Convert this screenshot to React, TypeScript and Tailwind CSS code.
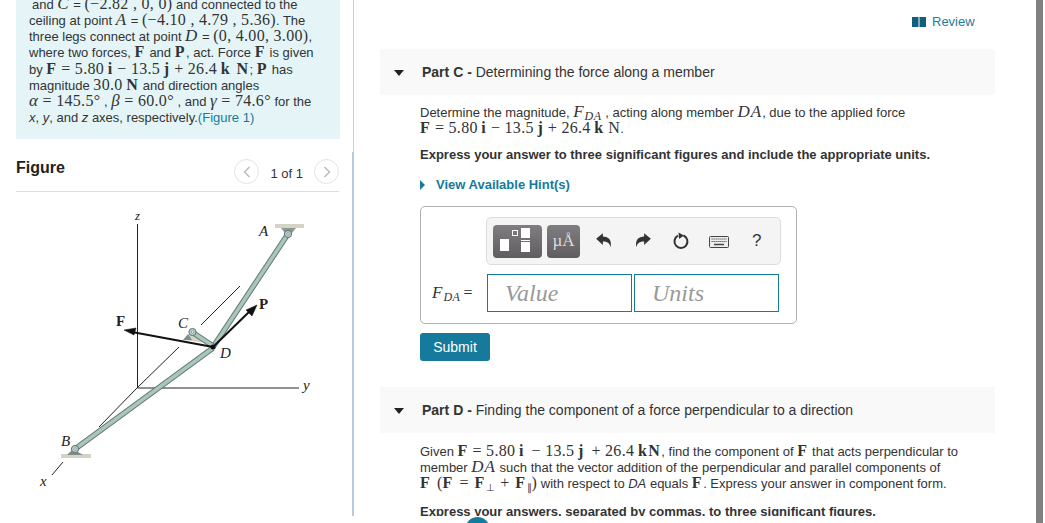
import type { ReactNode } from 'react';

const M = ({ children }: { children: ReactNode }) => (
  <span className="font-['Liberation_Serif',serif] text-[16px] tracking-[0.3px]">{children}</span>
);
const B = ({ children }: { children: ReactNode }) => (
  <span className="font-['Liberation_Serif',serif] text-[16px] font-bold tracking-[1.5px]">{children}</span>
);
const I = ({ children }: { children: ReactNode }) => (
  <span className="font-['Liberation_Serif',serif] text-[17px] italic tracking-[1px]">{children}</span>
);
const Sub = ({ children }: { children: ReactNode }) => (
  <sub className="font-['Liberation_Serif',serif] italic text-[12px] tracking-[0.5px]">{children}</sub>
);

const Member = ({ d }: { d: string }) => (
  <g fill="none">
    <path d={d} stroke="#5f7470" strokeWidth="5.5" />
    <path d={d} stroke="#a9c6bd" strokeWidth="3.6" />
  </g>
);

const Pin = ({ x, y }: { x: number; y: number }) => (
  <g>
    <circle cx={x} cy={y} r="3.6" fill="#b9cfc9" stroke="#5f7470" strokeWidth="1" />
    <circle cx={x} cy={y} r="1.3" fill="#dfeee9" stroke="#5f7470" strokeWidth="0.5" />
  </g>
);

/** The three-legged frame drawing; viewBox uses page coordinates */
const FrameFigure = () => (
  <svg width="336" height="320" viewBox="16 196 336 320" className="block">
    <g stroke="#222" strokeWidth="1" fill="none">
      <path d="M137.5 225V389H299" />
      <path d="M137 389L99 428" />
      <path d="M179 348L137 389" />
      <path d="M201 326L240 287" />
      <path d="M63 463L52 476" />
    </g>
    <rect x="275" y="225" width="29" height="4" fill="#d6d2c4" />
    <path d="M281 229H296L292 234H285Z" fill="#8a9a98" />
    <path d="M183 341L192 333L207 344Z" fill="#d4d2c6" />
    <path d="M183 341L188 335L192 341Z" fill="#7d8d8b" />
    <rect x="61" y="455" width="30" height="4" fill="#d6d2c4" />
    <path d="M67 456L73 450L83 456Z" fill="#7d8d8b" />
    <Member d="M288 235L213 348" />
    <Member d="M192 333L213 347" />
    <Member d="M75 450L213 349" />
    <Pin x={288} y={235} />
    <Pin x={192.5} y={333} />
    <Pin x={75} y={450} />
    <g stroke="#111" strokeWidth="2" fill="#111">
      <path d="M213 348L132 333" fill="none" />
      <path d="M213 348L250 312" fill="none" />
      <path d="M124 331L136 329L134 336Z" strokeWidth="0.5" />
      <path d="M257 306L252 317L246 311Z" strokeWidth="0.5" />
      <circle cx="213" cy="348" r="1.5" />
    </g>
    <g fontFamily="Liberation Serif, serif" fontSize="15" fill="#222" fontStyle="italic">
      <text x="135" y="221" fontSize="13">z</text>
      <text x="259" y="237">A</text>
      <text x="178" y="329">C</text>
      <text x="220" y="359">D</text>
      <text x="303" y="391">y</text>
      <text x="61" y="447">B</text>
      <text x="40" y="487">x</text>
    </g>
    <g fontFamily="Liberation Serif, serif" fontSize="15" fill="#222" fontWeight="bold">
      <text x="116" y="327">F</text>
      <text x="259" y="310">P</text>
    </g>
  </svg>
);

const Band = ({ part, title }: { part: string; title: string }) => (
  <div className="w-[615px] h-[46px] bg-[#f9f9f9] flex items-center">
    <div className="ml-[14px] mt-[1px] w-0 h-0 border-x-[5px] border-x-transparent border-t-[6px] border-t-[#222]" />
    <h2 className="ml-[18px] text-[14px] text-[#333] whitespace-nowrap">
      <span className="font-bold">Part {part} - </span>
      {title}
    </h2>
  </div>
);

const Toolbar = () => (
  <div className="w-[295px] h-[48px] ml-[65px] bg-[#f4f4f4] border border-[#ddd] rounded-[5px] flex items-center pl-[6px]">
    <div className="relative w-[49px] h-[33px] rounded-[4px] bg-gradient-to-b from-[#807e80] to-[#5f5d5f]">
      <div className="absolute left-[7px] top-[14px] w-[9px] h-[12px] bg-white" />
      <div className="absolute left-[19px] top-[5px] w-[6px] h-[6px] border border-white" />
      <div className="absolute left-[28px] top-[3px] w-[9px] h-[10px] bg-white" />
      <div className="absolute left-[28px] top-[15px] w-[9px] h-px bg-white" />
      <div className="absolute left-[28px] top-[17px] w-[9px] h-[10px] bg-white" />
    </div>
    <div className="ml-[5px] w-[33px] h-[33px] rounded-[4px] bg-gradient-to-b from-[#807e80] to-[#5f5d5f] flex items-center justify-center font-['Liberation_Serif',serif] text-[17px] text-[#ddd]">
      µÅ
    </div>
    <svg width="18" height="18" viewBox="0 0 16 16" className="ml-[15px]" fill="#333">
      <path d="M1 6L7 1V4C12 4 15 7 14 13.500C13 10 11 8.500 7 8.500V11.500Z" />
    </svg>
    <svg width="18" height="18" viewBox="0 0 16 16" className="ml-[21px]" fill="#333">
      <path d="M15 6L9 1V4C4 4 1 7 2 13.500C3 10 5 8.500 9 8.500V11.500Z" />
    </svg>
    <svg width="18" height="18" viewBox="0 0 18 18" className="ml-[20px]" fill="none">
      <path d="M11.500 3.500A6.500 6.500 0 1 1 6 3.700" stroke="#333" strokeWidth="2" />
      <path d="M6.500 0.500L12 3.500L7 7Z" fill="#333" />
    </svg>
    <svg width="20" height="12" viewBox="0 0 20 12" className="ml-[19px] mt-[2px]">
      <rect x="0.500" y="0.500" width="19" height="11" rx="1" fill="#eee" stroke="#444" />
      <path d="M2.500 3H17.500M2.500 5.500H17.500" stroke="#444" strokeWidth="1.200" strokeDasharray="1.200 0.800" />
      <path d="M5 8.500H15" stroke="#444" strokeWidth="1.500" />
    </svg>
    <span className="ml-[23px] text-[17px] text-[#333]">?</span>
  </div>
);

export default function App() {
  return (
    <div className="relative h-[523px] w-[1045px] overflow-hidden bg-white flex font-['Liberation_Sans',sans-serif] text-[13px] text-[#333]">
      {/* Left column */}
      <div className="w-[352px] shrink-0 pl-[16px]">
        <div className="w-[324px] h-[139px] overflow-hidden bg-[#e5f5f7] pl-[13px] leading-[16px] whitespace-nowrap">
          <div className="mt-[-4.500px]">
            <div className="h-[16.300px] pl-[3px]">
              and <I>C</I> = <M>(−2.82 , 0, 0)</M> and connected to the
            </div>
            <div className="h-[16.300px]">
              ceiling at point <I>A</I> = <M>(−4.10 , 4.79 , 5.36)</M>. The
            </div>
            <div className="h-[16.300px]">
              three legs connect at point <I>D</I> = <M>(0, 4.00, 3.00)</M>,
            </div>
            <div className="h-[16.300px]">
              where two forces, <B>F</B> and <B>P</B>, act. Force <B>F</B> is given
            </div>
            <div className="h-[16.300px]">
              by <B>F</B> <M>= 5.80</M> <B>i</B> <M>− 13.5</M> <B>j</B> <M>+ 26.4</M> <B>k N</B>; <B>P</B> has
            </div>
            <div className="h-[16.300px]">
              magnitude <M>30.0</M> <B>N</B> and direction angles
            </div>
            <div className="h-[16.300px]">
              <I>α</I> <M>= 145.5°</M> , <I>β</I> <M>= 60.0°</M> , and <I>γ</I> <M>= 74.6°</M> for the
            </div>
            <div className="h-[16.300px]">
              <em>x</em>, <em>y</em>, and <em>z</em> axes, respectively.<span className="text-[#157a9c]">(Figure 1)</span>
            </div>
          </div>
        </div>
        <div className="w-[323px] h-[53px] border-b border-[#ddd] flex items-start">
          <h3 className="mt-[17px] text-[16px] font-bold text-[#222]">Figure</h3>
          <div className="ml-auto mt-[20px] flex items-center">
            <div className="w-[25px] h-[25px] rounded-full border border-[#e4e4e4] flex items-center justify-center text-[#bbb]">
              <svg width="8" height="12" viewBox="0 0 8 12" fill="none" stroke="#bbb" strokeWidth="1.500">
                <path d="M6.500 1L1.500 6L6.500 11" />
              </svg>
            </div>
            <span className="ml-[11px] mt-[5px] text-[#333] text-[13px]">1 of 1</span>
            <div className="ml-[11px] w-[25px] h-[25px] rounded-full border border-[#e4e4e4] flex items-center justify-center">
              <svg width="8" height="12" viewBox="0 0 8 12" fill="none" stroke="#bbb" strokeWidth="1.500">
                <path d="M1.500 1L6.500 6L1.500 11" />
              </svg>
            </div>
          </div>
        </div>
        <div className="mt-[3px]">
          <FrameFigure />
        </div>
      </div>

      {/* Divider */}
      <div className="w-[2px] shrink-0 flex flex-col">
        <div className="h-[152px] w-px ml-px bg-[#c3d2e2]" />
        <div className="h-[364px] w-[2px] bg-[#b9c9de]" />
      </div>

      {/* Right column */}
      <div className="w-[682px] shrink-0 h-[516px] overflow-hidden pl-[26px]">
        <div className="h-[49px] w-[615px] flex items-start">
          <div className="ml-[532px] mt-[12px] flex items-center text-[#1f7a9c]">
            <svg width="14" height="12" viewBox="0 0 14 12" fill="#0f5f7d">
              <rect x="0" y="1" width="6.500" height="10" />
              <rect x="7.500" y="1" width="6.500" height="10" />
            </svg>
            <span className="ml-[6px]">Review</span>
          </div>
        </div>

        <Band part="C" title="Determining the force along a member" />
        <div className="ml-[40px] w-[560px]">
          <div className="mt-[9px] leading-[15px] whitespace-nowrap">
            <div className="h-[15.500px]">
              Determine the magnitude, <I>F</I>
              <Sub>DA</Sub> , acting along member <I>DA</I>, due to the applied force
            </div>
            <div className="h-[15.500px]">
              <B>F</B> <M>= 5.80</M> <B>i</B> <M>− 13.5</M> <B>j</B> <M>+ 26.4</M> <B>k</B> <M>N</M>.
            </div>
          </div>
          <p className="mt-[12px] font-bold leading-[16px] whitespace-nowrap">
            Express your answer to three significant figures and include the appropriate units.
          </p>
          <div className="mt-[14px] flex items-center font-bold text-[#157a9c] leading-[16px]">
            <div className="w-0 h-0 border-y-[5px] border-y-transparent border-l-[5px] border-l-[#157a9c]" />
            <span className="ml-[11px]">View Available Hint(s)</span>
          </div>

          <div className="mt-[13px] w-[377px] h-[118px] border border-[#b0b0b0] rounded-[5px] pt-[10px]">
            <Toolbar />
            <div className="mt-[9px] flex items-center">
              <span className="ml-[11px] w-[55px] h-[20px] leading-[20px] whitespace-nowrap">
                <I>F</I>
                <Sub>DA</Sub>
                <span className="ml-[3px]">
                  <M>=</M>
                </span>
              </span>
              <div className="w-[145px] h-[38px] border border-[#157a9c] flex items-center pl-[17px] font-['Liberation_Serif',serif] italic text-[24px] text-[#999]">
                Value
              </div>
              <div className="ml-[2px] w-[145px] h-[38px] border border-[#157a9c] flex items-center pl-[17px] font-['Liberation_Serif',serif] italic text-[24px] text-[#999]">
                Units
              </div>
            </div>
          </div>

          <button className="mt-[9px] block w-[70px] h-[28px] rounded-[3px] bg-[#157a9c] text-white text-[14px]">Submit</button>
        </div>

        <div className="mt-[26px]">
          <Band part="D" title="Finding the component of a force perpendicular to a direction" />
        </div>
        <div className="ml-[40px] w-[560px] mt-[10px] leading-[15px] whitespace-nowrap">
          <div className="h-[16px]">
            Given <B>F</B> <M>= 5.80</M> <B>i</B> <span className="ml-[3px]"><M>− 13.5</M></span> <B>j</B>{' '}
            <span className="ml-[3px]"><M>+ 26.4</M></span> <B>kN</B>, find the component of <B>F</B> that acts perpendicular to
          </div>
          <div className="h-[16px]">
            member <I>DA</I> such that the vector addition of the perpendicular and parallel components of
          </div>
          <div className="h-[16px]">
            <B>F</B> <span className="ml-[2px]"><M>(</M></span>
            <B>F</B> <span className="mx-[2px]"><M>=</M></span> <B>F</B>
            <sub className="text-[10px]">⊥</sub> <span className="mx-[2px]"><M>+</M></span> <B>F</B>
            <sub className="text-[10px]">∥</sub>
            <M>)</M> with respect to <em>DA</em> equals <B>F</B>. Express your answer in component form.
          </div>
          <p className="mt-[13px] font-bold leading-[16px]">Express your answers, separated by commas, to three significant figures.</p>
        </div>
      </div>

      {/* Scrollbar strip on the right edge */}
      <div className="w-[7px] shrink-0 bg-[#808080] h-full" />

      {/* Help bubble cut off by the bottom of the window */}
      <div className="absolute left-[465px] top-[517px] w-[25px] h-[25px] rounded-full bg-[#157a9c]" />
    </div>
  );
}
